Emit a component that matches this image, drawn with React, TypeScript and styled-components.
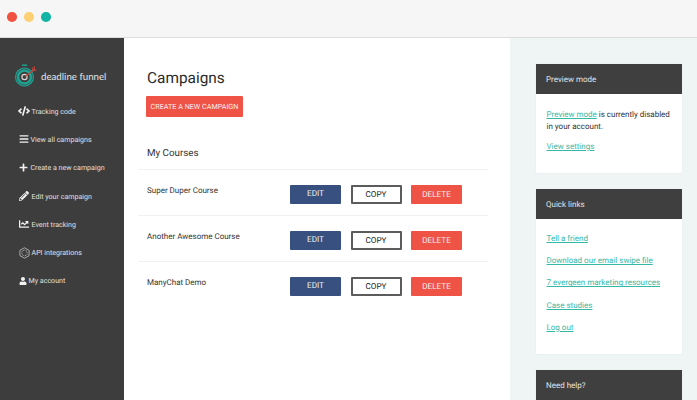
import React from 'react';
import styled, { createGlobalStyle } from 'styled-components';
import { FaCode, FaBars, FaPlus, FaPencilAlt, FaChartLine, FaUser } from 'react-icons/fa';

const GlobalStyle = createGlobalStyle`
  html, body {
    margin: 0;
    padding: 0;
    width: 697px;
    height: 400px;
    overflow: hidden;
    font-family: Roboto, "Liberation Sans", sans-serif;
    background: #fff;
  }
  * {
    text-rendering: geometricPrecision;
  }
`;

const Page = styled.div`
  width: 697px;
  height: 400px;
  display: flex;
  flex-direction: column;
  overflow: hidden;
`;
const TitleBar = styled.div`
  height: 38px;
  flex: none;
  display: flex;
  align-items: flex-start;
  gap: 7.5px;
  padding: 12px 0 0 7px;
  box-sizing: border-box;
  background: #f6f6f6;
  border-bottom: 1px solid #dcdcdc;
`;
const Dot = styled.span<{ $color: string }>`
  width: 9.5px;
  height: 9.5px;
  border-radius: 50%;
  background: ${(p) => p.$color};
`;
const Body = styled.div`
  flex: 1;
  display: flex;
  min-height: 0;
`;
const Sidebar = styled.nav`
  width: 124px;
  flex: none;
  background: #3d3d3d;
  box-sizing: border-box;
  padding: 25px 0 0 15px;
`;
const Brand = styled.div`
  display: flex;
  align-items: center;
  gap: 3px;
  height: 26px;
  margin-bottom: 8px;
`;
const BrandName = styled.span`
  font-family: Lato, sans-serif;
  font-size: 9.7px;
  font-weight: 400;
  color: #e6e6e6;
  white-space: nowrap;
  padding-top: 2px;
`;
const NavList = styled.div`
  display: flex;
  flex-direction: column;
`;
const NavItem = styled.div`
  height: 28.3px;
  display: flex;
  align-items: center;
  gap: 1.5px;
  padding-left: 3px;
  color: #e0e0e0;
  font-size: 7.1px;
  white-space: nowrap;
`;
const NavIcon = styled.span<{ $w: number }>`
  width: ${(p) => p.$w}px;
  display: flex;
  justify-content: center;
  color: #f2f2f2;
`;
const Main = styled.main`
  width: 386px;
  flex: none;
  box-sizing: border-box;
  padding: 29px 22px 0 14px;
  background: #fff;
`;
const Title = styled.h1`
  margin: 0 0 7px 9px;
  font-size: 15.4px;
  line-height: 22px;
  font-weight: 400;
  color: #2c2c2c;
`;
const CreateButton = styled.button`
  display: block;
  margin: 0 0 29px 8px;
  width: 97px;
  height: 21px;
  padding: 0;
  border: 0;
  border-radius: 1px;
  background: #ee5345;
  color: #fbeeee;
  font: 400 7.2px Roboto, sans-serif;
  white-space: nowrap;
`;
const SectionTitle = styled.h2`
  margin: 0 0 0 9px;
  height: 23px;
  padding-top: 1px;
  box-sizing: border-box;
  font-size: 9.8px;
  line-height: 14px;
  font-weight: 400;
  color: #333;
`;
const Row = styled.div`
  height: 46px;
  box-sizing: border-box;
  border-top: 1px solid #eef2f2;
  display: flex;
  align-items: flex-start;
  padding: 15px 0 0 9px;
`;
const CourseName = styled.div`
  width: 143px;
  flex: none;
  font-size: 8px;
  line-height: 12px;
  color: #333;
`;
const Actions = styled.div`
  display: flex;
  gap: 9.5px;
`;
const ActionButton = styled.button<{ $kind: 'edit' | 'copy' | 'delete' }>`
  width: 51px;
  height: 19px;
  box-sizing: border-box;
  padding: 0 0 ${(p) => (p.$kind === 'edit' ? 2 : 0)}px;
  border-radius: 1px;
  font: 400 8.2px Roboto, sans-serif;
  border: ${(p) => (p.$kind === 'copy' ? '2px solid #5c5c5c' : '0')};
  background: ${(p) =>
    p.$kind === 'edit' ? '#38507f' : p.$kind === 'copy' ? '#fff' : '#ee5345'};
  color: ${(p) => (p.$kind === 'copy' ? '#222' : '#f0f0f0')};
`;
const Aside = styled.aside`
  flex: 1;
  background: #eff5f5;
  box-sizing: border-box;
  padding: 26px 15px 0 26px;
  display: flex;
  flex-direction: column;
  gap: 16px;
`;
const Card = styled.section`
  flex: none;
  background: #fff;
  border-radius: 1px;
  box-shadow: 0 0 1px rgba(0, 0, 0, 0.15);
`;
const CardHead = styled.div`
  height: 30px;
  box-sizing: border-box;
  padding: 1px 0 0 10px;
  display: flex;
  align-items: center;
  background: #3f3f3f;
  color: #e4e4e4;
  font-size: 8px;
`;
const CardBody = styled.div<{ $h: number; $top: number }>`
  height: ${(p) => p.$h}px;
  box-sizing: border-box;
  padding: ${(p) => p.$top}px 8px 0 10.5px;
  font-size: 8px;
  line-height: 12px;
  color: #333;
`;
const Paragraph = styled.p`
  margin: 0 0 8px;
`;
const Link = styled.a`
  color: #35b8a8;
  text-decoration: underline;
  white-space: nowrap;
`;
const LinkList = styled.div`
  display: flex;
  flex-direction: column;
  gap: 10.2px;
`;

const Logo = () => (
  <svg width="23" height="26" viewBox="0 0 23 26" fill="none">
    <rect x="7" y="1.5" width="5" height="1.4" fill="#1fa596" />
    <circle cx="9.5" cy="14" r="9.5" fill="#1fa596" />
    <circle cx="9.5" cy="14" r="8" stroke="#3d3d3d" strokeWidth="0.7" />
    <circle cx="9.5" cy="14" r="5.2" fill="#3d3d3d" />
    <circle cx="9.5" cy="14" r="2.6" stroke="#d8d8d8" strokeWidth="1.2" />
    <path d="M10 13.5 19 7" stroke="#c4473a" strokeWidth="1.3" />
    <path d="M17.5 4.5 18 7.5 21.5 7M19.5 3.5 19 7" stroke="#c4473a" strokeWidth="1.1" />
  </svg>
);

const ApiIcon = () => (
  <svg width="11" height="12" viewBox="0 0 12 13" fill="none" stroke="#b5b5b5">
    <path d="M6 .8 11 3.6v5.8L6 12.2 1 9.4V3.6z" strokeWidth="1" />
    <path d="M6 3.2 8.8 4.8v3.4L6 9.8 3.2 8.2V4.8z" strokeWidth="1" strokeDasharray="1.2 .8" />
  </svg>
);

const nav = [
  { label: 'Tracking code', icon: <FaCode size={12} />, w: 12 },
  { label: 'View all campaigns', icon: <FaBars size={10} />, w: 11 },
  { label: 'Create a new campaign', icon: <FaPlus size={9} />, w: 11 },
  { label: 'Edit your campaign', icon: <FaPencilAlt size={10} />, w: 12 },
  { label: 'Event tracking', icon: <FaChartLine size={10} />, w: 12 },
  { label: 'API integrations', icon: <ApiIcon />, w: 12 },
  { label: 'My account', icon: <FaUser size={8} />, w: 9 },
];

const courses = ['Super Duper Course', 'Another Awesome Course', 'ManyChat Demo'];
const quickLinks = [
  'Tell a friend',
  'Download our email swipe file',
  '7 evergeen marketing resources',
  'Case studies',
  'Log out',
];

export default function App() {
  return (
    <Page>
      <GlobalStyle />
      <TitleBar>
        <Dot $color="#f0523f" />
        <Dot $color="#fdd073" />
        <Dot $color="#12b5a5" />
      </TitleBar>
      <Body>
        <Sidebar>
          <Brand>
            <Logo />
            <BrandName>deadline funnel</BrandName>
          </Brand>
          <NavList>
            {nav.map((item) => (
              <NavItem key={item.label}>
                <NavIcon $w={item.w}>{item.icon}</NavIcon>
                {item.label}
              </NavItem>
            ))}
          </NavList>
        </Sidebar>
        <Main>
          <Title>Campaigns</Title>
          <CreateButton>CREATE A NEW CAMPAIGN</CreateButton>
          <SectionTitle>My Courses</SectionTitle>
          {courses.map((name) => (
            <Row key={name}>
              <CourseName>{name}</CourseName>
              <Actions>
                <ActionButton $kind="edit">EDIT</ActionButton>
                <ActionButton $kind="copy">COPY</ActionButton>
                <ActionButton $kind="delete">DELETE</ActionButton>
              </Actions>
            </Row>
          ))}
        </Main>
        <Aside>
          <Card>
            <CardHead>Preview mode</CardHead>
            <CardBody $h={79} $top={15}>
              <Paragraph>
                <Link>Preview mode</Link> is currently disabled in your account.
              </Paragraph>
              <Link>View settings</Link>
            </CardBody>
          </Card>
          <Card>
            <CardHead>Quick links</CardHead>
            <CardBody $h={135} $top={14}>
              <LinkList>
                {quickLinks.map((text) => (
                  <div key={text}>
                    <Link>{text}</Link>
                  </div>
                ))}
              </LinkList>
            </CardBody>
          </Card>
          <Card>
            <CardHead>Need help?</CardHead>
          </Card>
        </Aside>
      </Body>
    </Page>
  );
}
